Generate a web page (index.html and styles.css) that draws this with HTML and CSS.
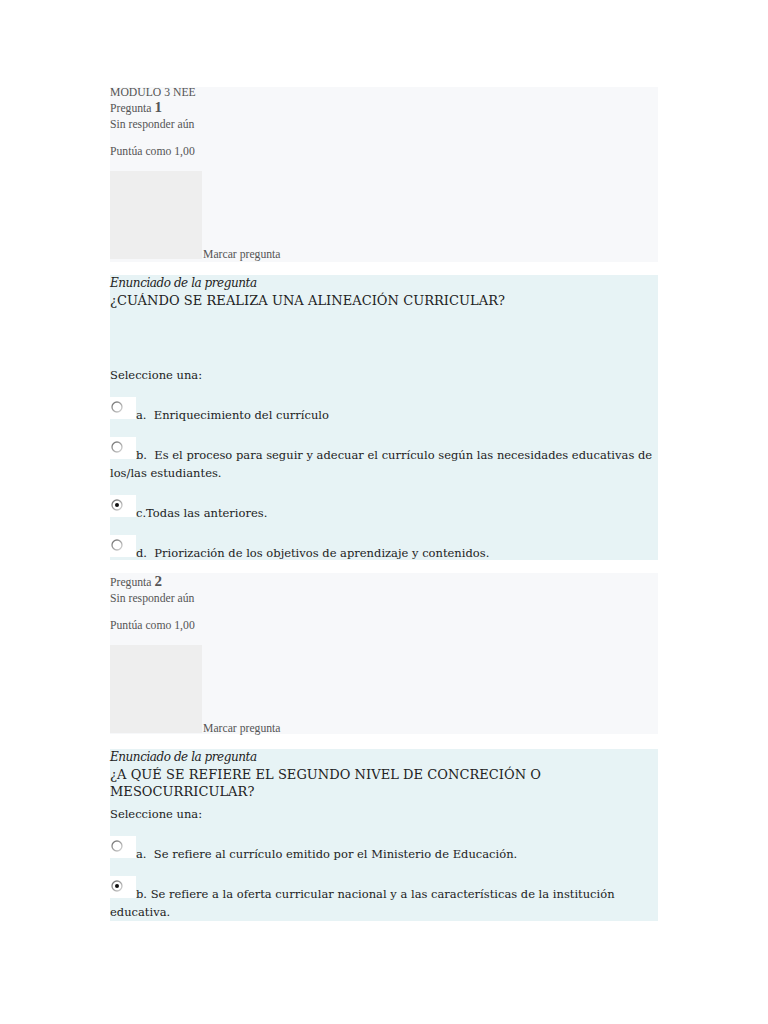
FILE: index.html
```html
<!DOCTYPE html>
<html lang="es">
<head>
<meta charset="utf-8">
<title>MODULO 3 NEE</title>
<link rel="stylesheet" href="styles.css">
</head>
<body>
<div class="page">
  <section class="info first">
    <div class="small top">MODULO 3 NEE</div>
    <div class="small">Pregunta <b class="num">1</b></div>
    <div class="small">Sin responder aún</div>
    <div class="small score">Puntúa como 1,00</div>
    <div class="flag"><span class="flag-box"></span><span class="small flag-text">Marcar pregunta</span></div>
  </section>

  <section class="content">
    <div class="label">Enunciado de la pregunta</div>
    <div class="question">¿CUÁNDO SE REALIZA UNA ALINEACIÓN CURRICULAR?</div>
    <div class="spacer"></div>
    <div class="prompt">Seleccione una:</div>
    <div class="option"><span class="radio"><svg width="14" height="14" viewBox="0 0 14 14"><defs><linearGradient id="g1" x1="0" y1="0" x2="1" y2="1"><stop offset="0" stop-color="#6d6d6d"/><stop offset="1" stop-color="#d8d8d8"/></linearGradient></defs><circle cx="7" cy="7" r="5" fill="#fff" stroke="url(#g1)" stroke-width="1.3"/></svg></span>a.&nbsp; Enriquecimiento del currículo</div>
    <div class="option"><span class="radio"><svg width="14" height="14" viewBox="0 0 14 14"><circle cx="7" cy="7" r="5" fill="#fff" stroke="url(#g1)" stroke-width="1.3"/></svg></span>b.&nbsp; Es el proceso para seguir y adecuar el currículo según las necesidades educativas de los/las estudiantes.</div>
    <div class="option"><span class="radio"><svg width="14" height="14" viewBox="0 0 14 14"><circle cx="7" cy="7" r="5" fill="#fff" stroke="url(#g1)" stroke-width="1.3"/><circle cx="7" cy="7" r="2" fill="#111"/></svg></span>c.Todas las anteriores.</div>
    <div class="option"><span class="radio"><svg width="14" height="14" viewBox="0 0 14 14"><circle cx="7" cy="7" r="5" fill="#fff" stroke="url(#g1)" stroke-width="1.3"/></svg></span>d.&nbsp; Priorización de los objetivos de aprendizaje y contenidos.</div>
  </section>

  <section class="info second">
    <div class="small">Pregunta <b class="num">2</b></div>
    <div class="small">Sin responder aún</div>
    <div class="small score">Puntúa como 1,00</div>
    <div class="flag"><span class="flag-box"></span><span class="small flag-text">Marcar pregunta</span></div>
  </section>

  <section class="content second">
    <div class="label">Enunciado de la pregunta</div>
    <div class="question">¿A QUÉ SE REFIERE EL SEGUNDO NIVEL DE CONCRECIÓN O MESOCURRICULAR?</div>
    <div class="prompt tight">Seleccione una:</div>
    <div class="option"><span class="radio"><svg width="14" height="14" viewBox="0 0 14 14"><circle cx="7" cy="7" r="5" fill="#fff" stroke="url(#g1)" stroke-width="1.3"/></svg></span>a.&nbsp; Se refiere al currículo emitido por el Ministerio de Educación.</div>
    <div class="option"><span class="radio"><svg width="14" height="14" viewBox="0 0 14 14"><circle cx="7" cy="7" r="5" fill="#fff" stroke="url(#g1)" stroke-width="1.3"/><circle cx="7" cy="7" r="2" fill="#111"/></svg></span>b. Se refiere a la oferta curricular nacional y a las características de la institución educativa.</div>
  </section>
</div>
</body>
</html>
```
FILE: styles.css
```css
html, body {
  margin: 0;
  padding: 0;
  background: #ffffff;
}
body {
  font-family: "Liberation Serif", "Times New Roman", serif;
  color: #222222;
}
.page {
  width: 548px;
  margin-left: 110px;
  padding-top: 87px;
  display: flex;
  flex-direction: column;
  gap: 13px;
}
.info {
  background: #f7f8fa;
  padding-bottom: 3px;
}
.info.second {
  margin-top: 0;
  padding-bottom: 1px;
}
.small {
  font-size: 11.7px;
  line-height: 16px;
  color: #555555;
}
.small.top {
  line-height: 12px;
}
.num {
  font-size: 15px;
  font-weight: bold;
}
.score {
  margin-top: 11px;
  margin-bottom: 11px;
}
.flag {
  display: flex;
  align-items: flex-end;
}
.flag-box {
  width: 92px;
  height: 88px;
  background: #eeeeee;
}
.flag-text {
  line-height: 12px;
  padding-left: 1px;
  margin-bottom: -2px;
}
.content {
  background: #e7f3f5;
  font-family: "DejaVu Serif", "Liberation Serif", serif;
  font-size: 11.5px;
  line-height: 18px;
  color: #222222;
}
.content.second {
  margin-top: 2px;
}
.label {
  font-style: italic;
  font-size: 12px;
  line-height: 17px;
  letter-spacing: -0.45px;
}
.question {
  font-size: 13px;
  letter-spacing: 0.05px;
  line-height: 17px;
  margin-bottom: 1px;
}
.spacer {
  height: 56px;
}
.prompt {
  margin-bottom: 13px;
}
.prompt.tight {
  margin-top: 5px;
}
.option {
  margin-bottom: 13px;
}
.option:last-child {
  margin-bottom: -2px;
}
.content.second .option:last-child {
  margin-bottom: 0;
}
.radio {
  display: inline-block;
  width: 26px;
  height: 22px;
  background: #ffffff;
  position: relative;
  vertical-align: baseline;
}
.radio svg {
  position: absolute;
  left: 0;
  top: 3px;
}
```
